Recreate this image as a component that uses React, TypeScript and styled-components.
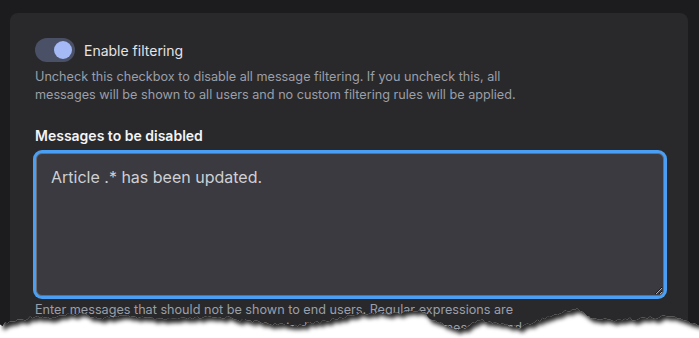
import React from 'react';
import styled, { createGlobalStyle } from 'styled-components';

const GlobalStyle = createGlobalStyle`
  html, body {
    margin: 0;
    padding: 0;
    background: #1c1c1e;
    color-scheme: dark;
  }

  body {
    font-family: Inter, 'Noto Sans', 'Liberation Sans', sans-serif;
    -webkit-font-smoothing: antialiased;
  }
`;

// rough outline of the torn bottom edge, in page coordinates
const TEAR_KEYS: [number, number][] = [
  [0, 326], [10, 322], [25, 319], [35, 316], [50, 318], [70, 315], [80, 313],
  [100, 318], [130, 316], [160, 320], [200, 318], [230, 317], [240, 320],
  [260, 322], [280, 325], [300, 325], [320, 322], [340, 318], [360, 313],
  [400, 313], [420, 310], [430, 318], [440, 323], [460, 330], [480, 320],
  [500, 324], [520, 327], [545, 318], [565, 312], [577, 308], [590, 318],
  [610, 320], [650, 318], [670, 316], [690, 322], [699, 326],
];

const TEAR_TOP = 293;

const jitter = (i: number) => {
  const s = Math.sin(i * 12.9898) * 43758.5453;
  return (s - Math.floor(s) - 0.5) * 3.2;
};

const buildTear = () => {
  const pts: string[] = [];
  let n = 0;
  for (let k = 0; k < TEAR_KEYS.length - 1; k++) {
    const [x0, y0] = TEAR_KEYS[k];
    const [x1, y1] = TEAR_KEYS[k + 1];
    for (let x = x0; x < x1; x += 2.5) {
      const t = (x - x0) / (x1 - x0);
      const y = y0 + (y1 - y0) * t + jitter(n++);
      pts.push(`${x.toFixed(1)},${(y - TEAR_TOP).toFixed(1)}`);
    }
  }
  const last = TEAR_KEYS[TEAR_KEYS.length - 1];
  pts.push(`${last[0]},${last[1] - TEAR_TOP}`);
  return pts;
};

const TornEdge = () => {
  const line = buildTear().join(' ');
  const below = `0,45 ${line} 699,45`;
  const above = `0,-10 ${line} 699,-10`;

  return (
    <Tear viewBox="0 0 699 45" preserveAspectRatio="none">
      <defs>
        <clipPath id="paper-below">
          <polygon points={below} />
        </clipPath>
        <filter id="tear-blur" x="-5%" y="-50%" width="110%" height="200%">
          <feGaussianBlur stdDeviation="2.2" />
        </filter>
      </defs>
      <polygon points={below} fill="#ffffff" />
      <g clipPath="url(#paper-below)">
        <polygon
          points={above}
          fill="rgba(0,0,0,0.85)"
          transform="translate(3 4)"
          filter="url(#tear-blur)"
        />
      </g>
    </Tear>
  );
};

const App = () => {
  return (
    <>
      <GlobalStyle />
      <Page>
        <Panel>
          <ToggleRow>
            <Switch $on>
              <Knob $on />
            </Switch>
            <ToggleLabel>Enable filtering</ToggleLabel>
          </ToggleRow>
          <Hint>
            Uncheck this checkbox to disable all message filtering. If you uncheck this, all
            messages will be shown to all users and no custom filtering rules will be applied.
          </Hint>

          <Field>
            <FieldLabel htmlFor="disabled-messages">Messages to be disabled</FieldLabel>
            <TextArea
              id="disabled-messages"
              defaultValue="Article .* has been updated."
              spellCheck={false}
            />
            <Hint>
              Enter messages that should not be shown to end users. Regular expressions are
              supported, one pattern per line. Matching is done against the whole message and the
              pattern is case sensitive.
            </Hint>
          </Field>
        </Panel>
      </Page>
      <TornEdge />
    </>
  );
};

export default App;

const Page = styled.div`
  padding: 13px 11px 0 10px;
`;

const Panel = styled.section`
  background: #29292b;
  border-radius: 8px 8px 0 0;
  padding: 25px 24px 40px 25px;
`;

const ToggleRow = styled.label`
  display: flex;
  align-items: center;
  gap: 9px;
  cursor: pointer;
`;

const Switch = styled.span<{ $on?: boolean }>`
  display: inline-flex;
  align-items: center;
  justify-content: ${({ $on }) => ($on ? 'flex-end' : 'flex-start')};
  box-sizing: border-box;
  width: 40px;
  height: 24px;
  padding: 0 3px;
  border-radius: 12px;
  background: #4a5066;
`;

const Knob = styled.span<{ $on?: boolean }>`
  width: 18px;
  height: 18px;
  border-radius: 50%;
  background: ${({ $on }) => ($on ? '#a4b9f6' : '#8b8f99')};
`;

const ToggleLabel = styled.span`
  font-size: 14px;
  color: #e4e4e7;
  line-height: 20px;
  padding-top: 1px;
`;

const Hint = styled.p`
  max-width: 490px;
  margin: 6px 0 0;
  font-size: 12.65px;
  line-height: 17.5px;
  color: #9a9fa9;
`;

const Field = styled.div`
  display: flex;
  flex-direction: column;
  margin-top: 22px;

  ${Hint} {
    margin-top: 5px;
  }
`;

const FieldLabel = styled.label`
  font-size: 14px;
  font-weight: 600;
  line-height: 19px;
  color: #f4f4f5;
  padding-top: 1px;
  margin-bottom: 8px;
`;

const TextArea = styled.textarea`
  box-sizing: border-box;
  width: calc(100% - 1px);
  height: 143px;
  margin: 0 0 0 1px;
  padding: 12px 14px;
  border: 1px solid #6c6c73;
  border-radius: 6px;
  background: #3a3a40;
  box-shadow: 0 0 0 3px #4a9ff5;
  outline: none;
  resize: vertical;
  font-family: Inter, 'Noto Sans', 'Liberation Sans', sans-serif;
  font-size: 16px;
  line-height: 22px;
  color: #cfcfd4;
`;

const Tear = styled.svg`
  position: fixed;
  left: 0;
  bottom: 0;
  width: 100%;
  height: 45px;
  pointer-events: none;
`;
